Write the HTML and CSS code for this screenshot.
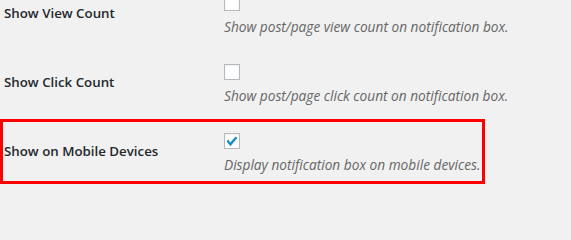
FILE: index.html
```html
<!DOCTYPE html>
<html>
<head>
<meta charset="utf-8">
<link rel="stylesheet" href="styles.css">
</head>
<body>
<div class="form">
  <div class="row">
    <div class="label">Show View Count</div>
    <div class="field">
      <span class="checkbox"></span>
      <p class="description">Show post/page view count on notification box.</p>
    </div>
  </div>
  <div class="row">
    <div class="label">Show Click Count</div>
    <div class="field">
      <span class="checkbox"></span>
      <p class="description">Show post/page click count on notification box.</p>
    </div>
  </div>
  <div class="row highlighted">
    <div class="label">Show on Mobile Devices</div>
    <div class="field">
      <span class="checkbox checked">
        <svg width="14" height="14" viewBox="0 0 14 14"><path d="M1.6 6.2 L3.4 4.6 L5.2 7.6 L10.6 1.4 L12.4 3.0 L5.4 11.2 Z" fill="#1e8cbe"/></svg>
      </span>
      <p class="description">Display notification box on mobile devices.</p>
    </div>
  </div>
</div>
</body>
</html>
```
FILE: styles.css
```css
html, body {
  margin: 0;
  padding: 0;
  background: #f1f1f1;
  overflow: hidden;
}
body {
  font-family: "Open Sans", "Noto Sans", sans-serif;
  color: #23282d;
}
.form {
  margin-top: -5px;
  padding-left: 4px;
}
.row {
  display: grid;
  grid-template-columns: 220px 1fr;
  height: 69px;
  position: relative;
}
.label {
  font-size: 13.3px;
  font-weight: 600;
  line-height: 18px;
  padding-top: 9px;
}
.field {
  display: flex;
  flex-direction: column;
  align-items: flex-start;
}
.checkbox {
  display: block;
  width: 16px;
  height: 16px;
  box-sizing: border-box;
  border: 1px solid #b4b9be;
  background: #fff;
  box-shadow: inset 0 1px 2px rgba(0,0,0,0.07);
  margin-bottom: 6px;
}
.checkbox.checked svg {
  display: block;
  margin: 1px 0 0 0;
}
.description {
  margin: 0;
  font-size: 13.7px;
  line-height: 20px;
  font-style: italic;
  color: #666;
}
.highlighted::after {
  content: "";
  position: absolute;
  top: -14px;
  left: -4px;
  width: 485px;
  height: 65px;
  border: 3px solid #ff0000;
  box-sizing: border-box;
}
```
